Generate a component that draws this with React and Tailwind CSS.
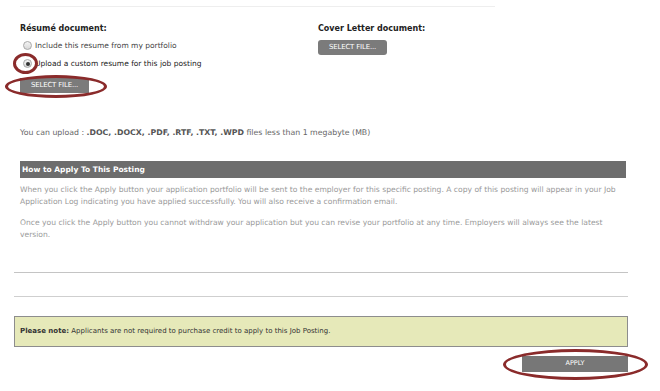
import React from 'react';

const Ring = ({ className }) => (
  <div className={`absolute rounded-[50%] border-[3px] border-[#8a2b2b] pointer-events-none ${className}`}></div>
);

const Radio = ({ checked }) => (
  <span className="inline-flex w-[9px] h-[9px] rounded-full border border-[#a8a8a8] bg-gradient-to-b from-[#f4f4f4] to-[#d8d8d8] items-center justify-center mr-[3px]">
    {checked && <span className="w-[4px] h-[4px] rounded-full bg-[#333]"></span>}
  </span>
);

const FileButton = ({ rounded }) => (
  <button className={`w-[69px] h-[15px] bg-[#7b7b7b] text-white text-[7px] tracking-tight flex items-center justify-center ${rounded ? 'rounded-[3px]' : ''}`}>
    SELECT FILE...
  </button>
);

export default function App() {
  return (
    <div className="relative w-[660px] h-[391px] bg-white overflow-hidden font-['DejaVu_Sans',sans-serif] text-[#333]">
      <div className="ml-[20px] mt-[6px] w-[475px] h-px bg-[#eeeeee]"></div>

      <div className="flex mt-[16px]">
        <div className="w-[318px] pl-[20px]">
          <h3 className="text-[8px] font-bold text-[#222] leading-[12px]">Résumé document:</h3>
          <label className="flex items-center mt-[5px] text-[7.5px] text-[#444] leading-[11px] pl-[3px]">
            <Radio /> Include this resume from my portfolio
          </label>
          <label className="flex items-center mt-[7px] text-[7.5px] text-[#222] leading-[11px] pl-[3px]">
            <Radio checked /> Upload a custom resume for this job posting
          </label>
          <div className="mt-[9px]">
            <FileButton />
          </div>
        </div>
        <div className="flex-1">
          <h3 className="text-[8px] font-bold text-[#222] leading-[12px]">Cover Letter document:</h3>
          <div className="mt-[5px]">
            <FileButton rounded />
          </div>
        </div>
      </div>

      <p className="ml-[20px] mt-[34px] text-[7.8px] text-[#666] leading-[11px]">
        You can upload : <b className="text-[#555]">.DOC, .DOCX, .PDF, .RTF, .TXT, .WPD</b> files less than 1 megabyte (MB)
      </p>

      <div className="ml-[20px] mt-[23px] w-[606px] h-[17px] bg-[#6d6d6d] flex items-center px-[2px]">
        <span className="text-white text-[7.5px] font-bold">How to Apply To This Posting</span>
      </div>

      <div className="ml-[20px] w-[608px] text-[7.6px] text-[#9a9a9a] leading-[12px]">
        <p className="mt-[6px]">
          When you click the Apply button your application portfolio will be sent to the employer for this specific posting. A copy of this posting will appear in your Job Application Log indicating you have applied successfully. You will also receive a confirmation email.
        </p>
        <p className="mt-[9px]">
          Once you click the Apply button you cannot withdraw your application but you can revise your portfolio at any time. Employers will always see the latest version.
        </p>
      </div>

      <div className="ml-[14px] mt-[31px] w-[614px] h-px bg-[#c4c4c4]"></div>
      <div className="ml-[14px] mt-[23px] w-[614px] h-px bg-[#cfcfcf]"></div>

      <div className="ml-[14px] mt-[19px] w-[614px] h-[31px] bg-[#e6e9b9] border border-[#8d8d8d] flex items-center px-[5px]">
        <p className="text-[7px] text-[#333]">
          <b>Please note:</b> Applicants are not required to purchase credit to apply to this Job Posting.
        </p>
      </div>

      <div className="flex justify-end mr-[32px] mt-[9px]">
        <button className="w-[106px] h-[16px] bg-[#777777] text-white text-[6.5px] flex items-center justify-center">APPLY</button>
      </div>

      <Ring className="left-[13px] top-[53px] w-[25px] h-[21px]" />
      <Ring className="left-[5px] top-[75px] w-[102px] h-[23px]" />
      <Ring className="left-[503px] top-[349px] w-[145px] h-[31px]" />
    </div>
  );
}
